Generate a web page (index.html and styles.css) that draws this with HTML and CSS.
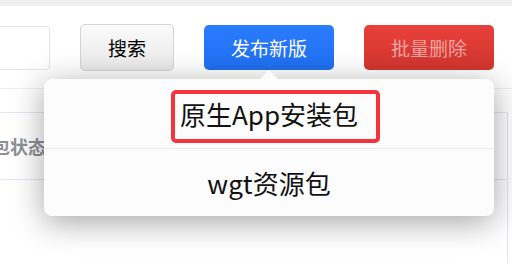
FILE: index.html
```html
<!DOCTYPE html>
<html lang="zh-CN">

<head>
    <meta charset="UTF-8">
    <meta name="viewport" content="width=device-width, initial-scale=1.0">
    <title>版本管理</title>
    <link rel="stylesheet" href="styles.css">
</head>

<body>
    <div class="topbar"></div>
    <div class="toolbar">
        <input class="search-input" type="text">
        <button class="btn btn-default">搜索</button>
        <button class="btn btn-primary">发布新版</button>
        <button class="btn btn-warn" disabled>批量删除</button>
    </div>
    <div class="table">
        <div class="table-head">
            <div class="th">安装包状态</div>
        </div>
    </div>

    <!-- 发布新版 dropdown -->
    <div class="popup">
        <div class="popup-item">原生App安装包</div>
        <div class="popup-item">wgt资源包</div>
        <span class="mark"></span>
    </div>
</body>

</html>
```

FILE: styles.css
```css
body {
    margin: 0;
    padding: 0;
    background-color: #fff;
    font-family: "Noto Sans CJK SC", "Noto Sans", sans-serif;
    overflow: hidden;
}

.topbar {
    height: 6px;
    background-color: #efefef;
}

.toolbar {
    display: flex;
    align-items: center;
    justify-content: flex-end;
    gap: 30px;
    height: 82px;
    padding-right: 18px;
    border-bottom: 1px solid #ebeef5;
    overflow: hidden;
}

.search-input {
    flex-shrink: 0;
    width: 180px;
    height: 44px;
    box-sizing: border-box;
    border: 1px solid #e5e5e5;
    border-radius: 4px;
    margin-top: 1px;
}

.btn {
    flex-shrink: 0;
    height: 45px;
    border: none;
    border-radius: 5px;
    font-family: inherit;
    font-size: 19px;
    padding: 0;
    cursor: pointer;
}

.btn-default {
    width: 94px;
    height: 47px;
    border: 1px solid #d4d4d4;
    background: linear-gradient(#fafafa, #e9e9e9);
    color: #000;
}

.btn-primary {
    width: 130px;
    background: linear-gradient(#2b7bff, #1f6ff0);
    color: #fff;
}

.btn-warn {
    width: 130px;
    background: linear-gradient(#e8403a, #d2352f);
    color: rgba(255, 255, 255, 0.55);
}

.table {
    margin-top: 23px;
    margin-right: 4px;
    border-top: 1px solid #e4e6f0;
    border-right: 1px solid #e4e6f0;
    height: 150px;
}

.table-head {
    height: 66px;
    border-bottom: 1px solid #e4e6f0;
    display: flex;
    align-items: center;
}

.th {
    width: 46px;
    display: flex;
    justify-content: flex-end;
    white-space: nowrap;
    overflow: hidden;
    font-size: 18px;
    font-weight: bold;
    color: #8e9096;
}

.popup {
    position: absolute;
    left: 44px;
    top: 79px;
    width: 450px;
    background-color: #fcfcfc;
    border-radius: 8px;
    box-shadow: 0 6px 32px rgba(0, 0, 0, 0.36);
}

.popup::before {
    content: "";
    position: absolute;
    left: 216px;
    top: -9px;
    border-left: 9px solid transparent;
    border-right: 9px solid transparent;
    border-bottom: 9px solid #fcfcfc;
}

.popup-item {
    height: 69px;
    display: flex;
    align-items: center;
    justify-content: center;
    font-size: 26px;
    color: #111;
}

.popup-item + .popup-item {
    height: 67px;
    border-top: 1px solid #ececec;
}

.mark {
    position: absolute;
    left: 127px;
    top: 11px;
    width: 201px;
    height: 45px;
    border: 4px solid #f4333a;
    border-radius: 5px;
}
```
